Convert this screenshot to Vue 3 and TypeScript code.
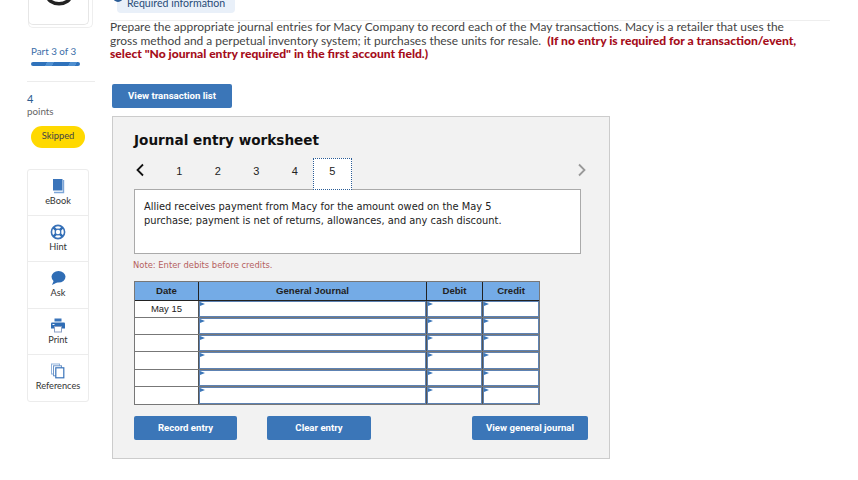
<script setup lang="ts">
const tools = [
  { label: 'eBook', icon: 'book' },
  { label: 'Hint', icon: 'hint' },
  { label: 'Ask', icon: 'ask' },
  { label: 'Print', icon: 'print' },
  { label: 'References', icon: 'refs' },
]
const tabs = ['1', '2', '3', '4']
const rows = [
  { date: 'May 15', h: 17 },
  { date: '', h: 17 },
  { date: '', h: 17 },
  { date: '', h: 18 },
  { date: '', h: 17 },
  { date: '', h: 17 },
]
</script>

<template>
  <div class="page">
    <aside class="side">
      <div class="stack">
        <div class="stack-inner">
          <svg class="arc" width="28" height="7" viewBox="0 0 28 7">
            <path d="M2 -6 C2 7 26 7 26 -6" fill="none" stroke="#222" stroke-width="3.5" />
          </svg>
        </div>
      </div>
      <div class="part">Part 3 of 3</div>
      <div class="bar"></div>
      <div class="rule"></div>
      <div class="num">4</div>
      <div class="pts">points</div>
      <div class="pill">Skipped</div>
      <div class="tools">
        <div v-for="t in tools" :key="t.label" class="tool" :class="t.icon">
          <svg width="16" height="16" viewBox="0 0 16 16">
            <template v-if="t.icon === 'book'">
              <path d="M3 1H12.5V12.5H3Z" fill="#3a74ba" />
              <path d="M13.5 2V14.5H4" fill="none" stroke="#7ea6d8" stroke-width="1.4" />
            </template>
            <template v-else-if="t.icon === 'hint'">
              <circle cx="8" cy="8" r="6.6" fill="none" stroke="#3a72b8" stroke-width="1.6" />
              <circle cx="8" cy="8" r="2.8" fill="#fff" stroke="#3a72b8" stroke-width="1.2" />
              <path d="M3.4 3.4L5.9 5.9M12.6 3.4L10.1 5.9M3.4 12.6L5.9 10.1M12.6 12.6L10.1 10.1" stroke="#2f6db5" stroke-width="2.6" />
            </template>
            <template v-else-if="t.icon === 'ask'">
              <ellipse cx="8.5" cy="6.8" rx="7" ry="5.8" fill="#2f6db5" />
              <path d="M4 10L2 15L8 12Z" fill="#2f6db5" />
            </template>
            <template v-else-if="t.icon === 'print'">
              <rect x="4.5" y="1.5" width="7" height="3" fill="#3a74ba" />
              <path d="M1 6.5Q1 5.5 2 5.5H14Q15 5.5 15 6.5V11.5H1Z" fill="#2f6db5" />
              <rect x="4.5" y="9.5" width="7" height="5.5" fill="#fff" stroke="#8a9fc4" />
              <rect x="2.5" y="7" width="2" height="1" fill="#fff" />
            </template>
            <template v-else>
              <rect x="1.5" y="1" width="8" height="10" fill="#fff" stroke="#8fb2dc" />
              <rect x="3.5" y="2.8" width="8" height="10" fill="#fff" stroke="#6d95c9" />
              <rect x="5.8" y="4.8" width="8" height="10" fill="#fff" stroke="#3a74ba" stroke-width="1.2" />
            </template>
          </svg>
          <span>{{ t.label }}</span>
        </div>
      </div>
    </aside>

    <main class="main">
      <div class="chip-row">
        <span class="dot"></span>
        <span class="chip">Required information</span>
      </div>
      <p class="intro">
        Prepare the appropriate journal entries for Macy Company to record each of the May transactions. Macy is a retailer that uses the<br />
        gross method and a perpetual inventory system; it purchases these units for resale.
        <b>(If no entry is required for a transaction/event,<br />select "No journal entry required" in the first account field.)</b>
      </p>
      <button class="btn list-btn">View transaction list</button>

      <section class="sheet">
        <h2>Journal entry worksheet</h2>
        <div class="tabs">
          <svg class="chev" width="10" height="14" viewBox="0 0 10 14"><path d="M8 1.5L2.5 7L8 12.5" fill="none" stroke="#111" stroke-width="1.8" /></svg>
          <span v-for="t in tabs" :key="t" class="tab">{{ t }}</span>
          <span class="tab active">5</span>
          <svg class="chev next" width="10" height="14" viewBox="0 0 10 14"><path d="M2 1.5L7.5 7L2 12.5" fill="none" stroke="#999" stroke-width="1.8" /></svg>
        </div>
        <div class="desc">
          Allied receives payment from Macy for the amount owed on the May 5<br />
          purchase; payment is net of returns, allowances, and any cash discount.
        </div>
        <div class="note">Note: Enter debits before credits.</div>

        <div class="table">
          <div class="row head">
            <div class="c date">Date</div>
            <div class="c gj">General Journal</div>
            <div class="c amt">Debit</div>
            <div class="c amt last">Credit</div>
          </div>
          <div v-for="(r, i) in rows" :key="i" class="row" :style="{ height: r.h + 'px' }">
            <div class="c date">{{ r.date }}</div>
            <div class="c gj input"></div>
            <div class="c amt input"></div>
            <div class="c amt last input"></div>
          </div>
        </div>

        <div class="actions">
          <button class="btn a1">Record entry</button>
          <button class="btn a2">Clear entry</button>
          <button class="btn a3">View general journal</button>
        </div>
      </section>
    </main>
  </div>
</template>

<style>
html, body { background: #fff; overflow: hidden; }
</style>

<style scoped>
.page {
  width: 858px;
  height: 480px;
  overflow: hidden;
  display: flex;
  font-family: "Lato", "Liberation Sans", sans-serif;
  color: #333;
}
.side {
  width: 110px;
  flex: none;
  padding-left: 27px;
  box-sizing: border-box;
}
.stack {
  width: 65px;
  height: 28px;
  border: 1px solid #eee;
  border-top: 0;
  border-radius: 0 0 5px 5px;
  box-sizing: border-box;
  margin-left: 1px;
}
.stack-inner {
  width: 61px;
  height: 25px;
  margin-left: -1px;
  border: 1px solid #e6e6e6;
  border-top: 0;
  border-radius: 0 0 5px 5px;
  box-sizing: border-box;
  display: flex;
  justify-content: center;
}
.arc { display: block; }
.part {
  margin: 16px 0 0 4px;
  font-size: 9.8px;
  line-height: 14px;
  color: #3b6ea8;
}
.bar {
  width: 49px;
  height: 4px;
  margin: 4px 0 0 4px;
  border-radius: 2px;
  background: repeating-linear-gradient(120deg, #2f72bb 0 14px, #4f8fd0 14px 20px);
}
.rule { width: 68px; height: 1px; background: #ececec; margin-top: 15px; }
.num { margin-top: 10px; font-size: 11px; line-height: 13px; color: #2c5c90; }
.pts { font-size: 9.8px; line-height: 13px; color: #666; }
.pill {
  width: 54px;
  height: 22px;
  margin: 8px 0 0 4px;
  border-radius: 11px;
  background: #ffd900;
  color: #444;
  font-size: 9.4px;
  line-height: 20px;
  text-align: center;
}
.tools {
  width: 62px;
  margin-top: 21px;
  border: 1px solid #ececec;
  border-radius: 3px;
  box-sizing: border-box;
}
.tool {
  height: 46px;
  display: flex;
  flex-direction: column;
  align-items: center;
  padding-top: 8px;
  box-sizing: border-box;
  border-bottom: 1px solid #ececec;
  font-size: 9.2px;
  line-height: 11px;
  color: #333;
}
.tool.ask { height: 47px; }
.tool span { margin-top: 1px; }
.tool:last-child { border-bottom: 0; }
.main { flex: 1; min-width: 0; }
.chip-row { height: 20px; width: 720px; border-bottom: 1px solid #eee; display: flex; position: relative; }
.dot {
  position: absolute;
  left: 3px;
  top: -8px;
  width: 10px;
  height: 10px;
  border-radius: 50%;
  background: #2a5c96;
}
.chip {
  margin-left: 7px;
  width: 118px;
  height: 13px;
  background: #e9f0f9;
  border-radius: 0 0 4px 4px;
  font-size: 10.6px;
  line-height: 6px;
  padding-left: 10px;
  box-sizing: border-box;
  color: #2a4d78;
}
.intro {
  margin: -1px 0 0;
  height: 41px;
  font-size: 11.94px;
  line-height: 13.5px;
  color: #444;
  white-space: nowrap;
}
.intro b { color: #a50d1a; font-weight: 900; font-size: 12.1px; margin-left: 3px; }
.btn {
  display: block;
  border: 0;
  border-radius: 2px;
  background: #3b76b8;
  color: #fff;
  font-family: "Roboto", "Liberation Sans", sans-serif;
  font-weight: 700;
  font-size: 9.6px;
  height: 24px;
  padding: 0 0 2px;
}
.list-btn { width: 120px; margin: 23px 0 0 2px; }
.sheet {
  width: 498px;
  height: 343px;
  margin: 8px 0 0 2px;
  padding: 0 0 0 21px;
  background: #f2f2f2;
  border: 1px solid #ccc;
  box-sizing: border-box;
}
h2 {
  margin: 0;
  padding-top: 14px;
  font-family: "DejaVu Sans", sans-serif;
  font-size: 13.6px;
  font-weight: 700;
  line-height: 18px;
  color: #111;
}
.tabs { display: flex; align-items: flex-start; height: 32px; margin-top: 9px; position: relative; }
.chev { margin: 5px 0 0 1px; flex: none; }
.tab {
  width: 38.5px;
  height: 32px;
  flex: none;
  text-align: center;
  font-family: "Liberation Sans", sans-serif;
  font-size: 11px;
  line-height: 27px;
  color: #222;
  box-sizing: border-box;
}
.tab:first-of-type { margin-left: 15px; }
.tab.active {
  margin-left: -1px;
  background: #fff;
  border: 1px dotted #2a5c96;
  line-height: 25px;
  position: relative;
  z-index: 1;
}
.chev.next { position: absolute; right: 22px; top: 0; }
.desc {
  width: 447px;
  height: 65px;
  margin-top: -1px;
  padding: 10px 9px 0;
  background: #fff;
  border: 1px solid #aaa;
  box-sizing: border-box;
  font-family: "DejaVu Sans", sans-serif;
  font-size: 9.85px;
  line-height: 14px;
  color: #222;
}
.note {
  margin: 6px 0 0 -1px;
  font-family: "DejaVu Sans", sans-serif;
  font-size: 8.4px;
  line-height: 11px;
  color: #b5605e;
}
.table {
  width: 406px;
  margin-top: 10px;
  border: 1px solid #777;
  box-sizing: border-box;
  font-family: "Liberation Sans", sans-serif;
  font-size: 9.5px;
  color: #222;
  background: #fff;
}
.row { display: flex; border-bottom: 1px solid #777; box-sizing: border-box; }
.row:last-child { border-bottom: 0; }
.head {
  height: 19px;
  background: #74abe6;
  border-bottom: 1px solid #222;
  font-weight: 700;
  font-size: 9.6px;
}
.c { box-sizing: border-box; text-align: center; line-height: 16px; border-right: 1px solid #555; }
.head .c { line-height: 18px; border-right-color: #222; }
.date { width: 64px; flex: none; }
.gj { width: 228px; flex: none; }
.amt { width: 56px; flex: none; }
.last { border-right: 0; }
.input {
  background: #fff;
  position: relative;
  box-shadow: inset 0 0 0 1px #5d82b3;
}
.input::before {
  content: "";
  position: absolute;
  left: 1px;
  top: 1px;
  border-left: 5px solid #3b76b8;
  border-top: 2.5px solid transparent;
  border-bottom: 2.5px solid transparent;
}
.actions { display: flex; margin-top: 11px; }
.a1 { width: 103px; }
.a2 { width: 104px; margin-left: 30px; }
.a3 { width: 116px; margin-left: 101px; }
</style>
